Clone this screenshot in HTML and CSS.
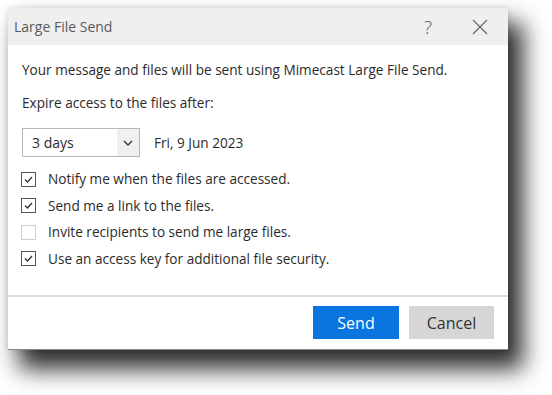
FILE: index.html
```html
<!DOCTYPE html>
<html>
<head>
<meta charset="utf-8">
<link rel="stylesheet" href="styles.css">
</head>
<body>
<div class="dialog">
  <div class="titlebar">
    <span class="title">Large File Send</span>
    <div class="title-actions">
      <span class="help">?</span>
      <svg class="close" width="16" height="16" viewBox="0 0 16 16"><path d="M1 1L15 15M15 1L1 15" stroke="#666" stroke-width="1.2" fill="none"/></svg>
    </div>
  </div>
  <div class="content">
    <p class="line intro">Your message and files will be sent using Mimecast Large File Send.</p>
    <p class="line expire">Expire access to the files after:</p>
    <div class="expiry-row">
      <div class="select">
        <span class="select-value">3 days</span>
        <span class="select-arrow"><svg width="10" height="6" viewBox="0 0 10 6"><path d="M1 1L5 5L9 1" stroke="#333" stroke-width="1.3" fill="none"/></svg></span>
      </div>
      <span class="date">Fri, 9 Jun 2023</span>
    </div>
    <div class="options">
      <label class="option"><span class="box checked"><svg width="9" height="7" viewBox="0 0 9 7"><path d="M1 3.5L3.5 6L8 1" stroke="#333" stroke-width="1.3" fill="none"/></svg></span>Notify me when the files are accessed.</label>
      <label class="option"><span class="box checked"><svg width="9" height="7" viewBox="0 0 9 7"><path d="M1 3.5L3.5 6L8 1" stroke="#333" stroke-width="1.3" fill="none"/></svg></span>Send me a link to the files.</label>
      <label class="option"><span class="box"></span>Invite recipients to send me large files.</label>
      <label class="option"><span class="box checked"><svg width="9" height="7" viewBox="0 0 9 7"><path d="M1 3.5L3.5 6L8 1" stroke="#333" stroke-width="1.3" fill="none"/></svg></span>Use an access key for additional file security.</label>
    </div>
  </div>
  <div class="footer">
    <button class="btn primary">Send</button>
    <button class="btn secondary">Cancel</button>
  </div>
</div>
</body>
</html>
```
FILE: styles.css
```css
html, body {
  margin: 0;
  background: #ffffff;
}
html {
  height: 100%;
}
body {
  min-height: 100%;
  box-sizing: border-box;
  padding: 8px;
  font-family: "Open Sans", "Noto Sans", sans-serif;
  color: #2b2b2b;
  overflow: hidden;
}
.dialog {
  width: 500px;
  height: 342px;
  background: #fff;
  display: flex;
  flex-direction: column;
  box-shadow: 0 0 6px rgba(0,0,0,0.12), 13px 17px 22px 2px rgba(0,0,0,0.82);
  border-bottom: 1px solid #8a8a8a;
  box-sizing: border-box;
}
.titlebar {
  height: 37px;
  flex: none;
  background: #efefef;
  display: flex;
  align-items: center;
  justify-content: space-between;
  padding: 0 20px 0 6px;
}
.title {
  font-size: 14px;
  color: #5a5a5a;
}
.title-actions {
  display: flex;
  align-items: center;
  gap: 40px;
}
.help {
  font-size: 19px;
  color: #555;
  font-weight: 300;
}
.close { display: block; }
.content {
  flex: 1;
  padding: 15px 14px 0 14px;
  border-bottom: 2px solid #dcdcdc;
}
.line {
  margin: 0;
  font-size: 13.6px;
  line-height: 20px;
}
.expire {
  margin-top: 13px;
}
.expiry-row {
  display: flex;
  align-items: center;
  gap: 14px;
  margin-top: 15px;
}
.select {
  width: 118px;
  height: 29px;
  box-sizing: border-box;
  border: 1px solid #b8b8b8;
  display: flex;
  align-items: stretch;
}
.select-value {
  flex: 1;
  font-size: 14px;
  display: flex;
  align-items: center;
  padding-left: 9px;
}
.select-arrow {
  width: 22px;
  background: #f0f0f0;
  display: flex;
  align-items: center;
  justify-content: center;
}
.date {
  font-size: 13.6px;
}
.options {
  display: flex;
  flex-direction: column;
  gap: 6.5px;
  margin-top: 12px;
}
.option {
  display: flex;
  align-items: center;
  gap: 12px;
  font-size: 13.6px;
  line-height: 20px;
  margin-left: -1px;
}
.box {
  width: 13px;
  height: 13px;
  border: 1px solid #cfcfcf;
  display: flex;
  align-items: center;
  justify-content: center;
}
.box.checked {
  border-color: #555;
}
.footer {
  flex: none;
  display: flex;
  justify-content: flex-end;
  gap: 10px;
  padding: 9px 14px 0 0;
  height: 52px;
  box-sizing: border-box;
}
.btn {
  height: 33px;
  width: 86px;
  border: none;
  font-family: inherit;
  font-size: 16px;
  cursor: pointer;
}
.btn.primary {
  background: #0a74e0;
  color: #fff;
}
.btn.secondary {
  background: #d6d6d6;
  color: #333;
  width: 85px;
}
```
